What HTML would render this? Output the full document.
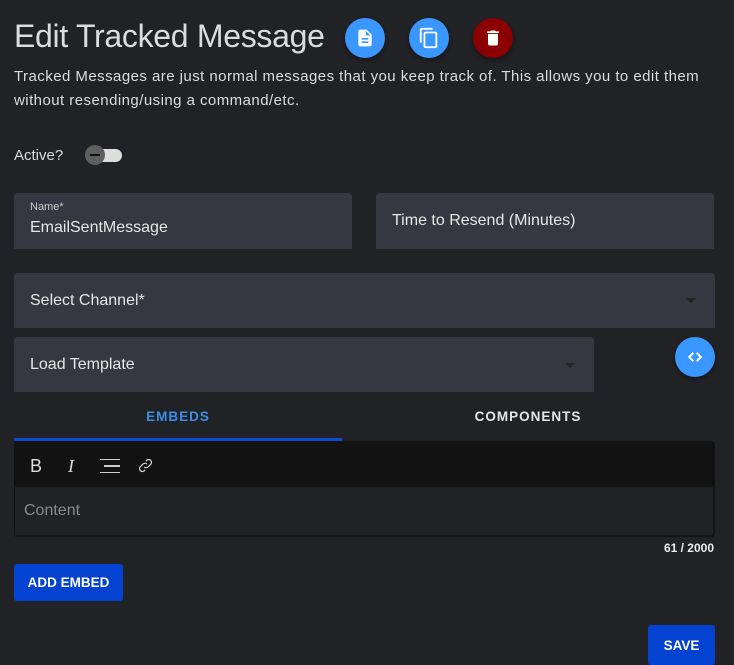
<!DOCTYPE html>
<html><head><style>
*{margin:0;padding:0;box-sizing:border-box}
body{width:734px;height:661px;background:#212226;font-family:"Liberation Sans",sans-serif;color:#e0e0e0;position:relative;overflow:hidden}
.a{position:absolute}
.fab{position:absolute;width:40px;height:40px;border-radius:50%;display:flex;align-items:center;justify-content:center;box-shadow:0 2px 4px rgba(0,0,0,.4)}
.f{position:absolute;background:#363841;border-radius:4px 4px 0 0}
.lbl{position:absolute;font-size:16px;color:#e6e6e6}
.btn{position:absolute;background:#0443d1;color:#fff;font-weight:bold;font-size:13.5px;border-radius:3px;display:flex;align-items:center;justify-content:center}
</style></head><body>
<div class="a" style="left:14px;top:18px;font-size:32px;letter-spacing:-0.3px;color:#dcdcdc;white-space:nowrap">Edit Tracked Message</div>
<div class="fab" style="left:345px;top:18px;background:#3a97ff"><svg width="20" height="20" viewBox="0 0 24 24"><path fill="#fff" d="M14 2H6c-1.1 0-2 .9-2 2v16c0 1.1.9 2 2 2h12c1.1 0 2-.9 2-2V8l-6-6zm2 16H8v-2h8v2zm0-4H8v-2h8v2zm-3-5V3.5L18.5 9H13z"/></svg></div>
<div class="fab" style="left:409px;top:18px;background:#3a97ff"><svg width="22" height="22" viewBox="0 0 24 24"><path fill="#fff" d="M16 1H4c-1.1 0-2 .9-2 2v14h2V3h12V1zm3 4H8c-1.1 0-2 .9-2 2v14c0 1.1.9 2 2 2h11c1.1 0 2-.9 2-2V7c0-1.1-.9-2-2-2zm0 16H8V7h11v14z"/></svg></div>
<div class="fab" style="left:473px;top:18px;background:#8b0000"><svg width="20" height="20" viewBox="0 0 24 24"><path fill="#fff" d="M6 19c0 1.1.9 2 2 2h8c1.1 0 2-.9 2-2V7H6v12zM19 4h-3.5l-1-1h-5l-1 1H5v2h14V4z"/></svg></div>
<div class="a" style="left:14px;top:65px;font-size:15px;line-height:24px;color:#dcdcdc;width:700px;letter-spacing:0.45px">Tracked Messages are just normal messages that you keep track of. This allows you to edit them without resending/using a command/etc.</div>
<div class="a" style="left:14px;top:147px;font-size:15px;color:#dcdcdc">Active?</div>
<div class="a" style="left:88px;top:149px;width:34px;height:13px;border-radius:7px;background:#ddd"></div>
<div class="a" style="left:85px;top:145px;width:20px;height:20px;border-radius:50%;background:#5f5f5f"></div>
<div class="a" style="left:90px;top:154px;width:10px;height:2px;background:#111"></div>
<div class="f" style="left:14px;top:193px;width:338px;height:56px"></div>
<div class="a" style="left:30px;top:201px;font-size:11px;color:#ccc">Name*</div>
<div class="lbl" style="left:30px;top:219px">EmailSentMessage</div>
<div class="f" style="left:376px;top:193px;width:338px;height:56px"></div>
<div class="lbl" style="left:392px;top:212px">Time to Resend (Minutes)</div>
<div class="f" style="left:14px;top:273px;width:701px;height:55px"></div>
<div class="lbl" style="left:30px;top:292px">Select Channel*</div>
<div class="a" style="left:686px;top:298px;border:5px solid transparent;border-top-color:#222;border-bottom:0"></div>
<div class="f" style="left:14px;top:337px;width:580px;height:55px"></div>
<div class="lbl" style="left:30px;top:356px">Load Template</div>
<div class="a" style="left:565px;top:363px;border:5px solid transparent;border-top-color:#222;border-bottom:0"></div>
<div class="fab" style="left:675px;top:337px;background:#3a97ff"><svg width="20" height="20" viewBox="0 0 24 24"><path fill="none" stroke="#fff" stroke-width="2.4" d="M10 7l-5 5 5 5M14 7l5 5-5 5"/></svg></div>
<div class="a" style="left:14px;top:409px;width:328px;text-align:center;font-size:13.5px;font-weight:bold;letter-spacing:1px;color:#3a8ee6">EMBEDS</div>
<div class="a" style="left:364px;top:409px;width:328px;text-align:center;font-size:13.5px;font-weight:bold;letter-spacing:1px;color:#e6e6e6">COMPONENTS</div>
<div class="a" style="left:14px;top:438px;width:328px;height:3px;background:#0a4bd6"></div>
<div class="a" style="left:14px;top:441px;width:701px;height:96px;background:#121212;border-radius:0 3px 3px 3px"></div>
<div class="a" style="left:15px;top:487px;width:698px;height:48px;background:#212226"></div>
<div class="a" style="left:30px;top:456px;font-size:18px;color:#ddd">B</div>
<div class="a" style="left:68px;top:456px;font-size:18px;font-style:italic;font-family:'Liberation Serif',serif;color:#ddd">I</div>
<div class="a" style="left:100px;top:459px;width:20px;height:14px;border-top:1.5px solid #ccc;border-bottom:1.5px solid #ccc"></div>
<div class="a" style="left:104px;top:465px;width:16px;height:1.5px;background:#ccc"></div>
<svg class="a" style="left:137px;top:457px" width="17" height="17" viewBox="0 0 24 24"><path fill="none" stroke="#ccc" stroke-width="1.8" d="M10 14a4 4 0 0 0 5.6 0l4-4a4 4 0 0 0-5.6-5.6l-1.5 1.5M14 10a4 4 0 0 0-5.6 0l-4 4a4 4 0 0 0 5.6 5.6l1.5-1.5"/></svg>
<div class="a" style="left:24px;top:502px;font-size:16px;color:#8a8a8a">Content</div>
<div class="a" style="left:600px;top:541px;width:114px;text-align:right;font-size:12px;font-weight:bold;color:#eee">61 / 2000</div>
<div class="btn" style="left:14px;top:564px;width:109px;height:37px">ADD EMBED</div>
<div class="btn" style="left:648px;top:625px;width:67px;height:40px">SAVE</div>
</body></html>
